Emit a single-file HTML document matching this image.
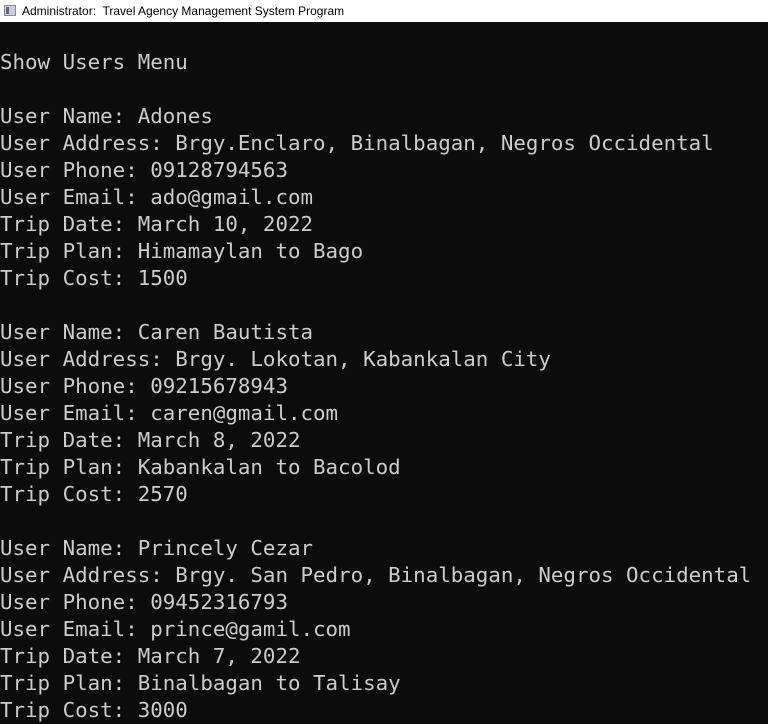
<!DOCTYPE html>
<html><head><meta charset="utf-8"><style>
body{margin:0;width:768px;height:700px;overflow:hidden;background:#0c0c0c;}
.t{height:22px;background:#fff;font:12px "Liberation Sans",sans-serif;color:#000;line-height:22px;position:relative;}
.t span{position:absolute;left:22px;top:0;}
.ic{position:absolute;left:4px;top:5px;width:12px;height:11px;background:#ccd;border:1px solid #889;box-sizing:border-box;}
.ic:before{content:"";position:absolute;left:1px;top:1px;width:3px;height:7px;background:#667;}
pre{margin:0;color:#ccc;font:20.8px "DejaVu Sans Mono","Liberation Mono",monospace;line-height:27px;}
</style></head><body>
<div class="t"><div class="ic"></div><span>Administrator:&nbsp; Travel Agency Management System Program</span></div>
<pre>&nbsp;
Show Users Menu

User Name: Adones
User Address: Brgy.Enclaro, Binalbagan, Negros Occidental
User Phone: 09128794563
User Email: ado@gmail.com
Trip Date: March 10, 2022
Trip Plan: Himamaylan to Bago
Trip Cost: 1500

User Name: Caren Bautista
User Address: Brgy. Lokotan, Kabankalan City
User Phone: 09215678943
User Email: caren@gmail.com
Trip Date: March 8, 2022
Trip Plan: Kabankalan to Bacolod
Trip Cost: 2570

User Name: Princely Cezar
User Address: Brgy. San Pedro, Binalbagan, Negros Occidental
User Phone: 09452316793
User Email: prince@gamil.com
Trip Date: March 7, 2022
Trip Plan: Binalbagan to Talisay
Trip Cost: 3000
</pre>
</body></html>
